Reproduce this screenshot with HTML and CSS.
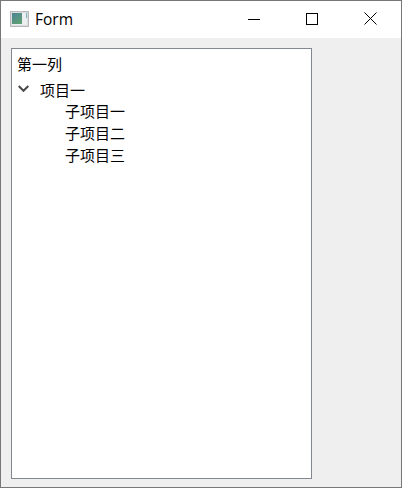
FILE: index.html
```html
<!DOCTYPE html>
<html lang="zh-CN">
<head>
  <meta charset="UTF-8">
  <title>Form</title>
  <link rel="stylesheet" href="styles.css">
</head>
<body>
  <div class="window">
    <div class="titlebar">
      <svg class="app-icon" width="19" height="16" viewBox="0 0 19 16">
        <defs>
          <linearGradient id="iconfill" x1="0" y1="0" x2="0.6" y2="1">
            <stop offset="0" stop-color="#4f8298"/>
            <stop offset="1" stop-color="#5c9f74"/>
          </linearGradient>
        </defs>
        <rect x="0.5" y="0.5" width="18" height="15" fill="#d9dde0" stroke="#b8b8b8"/>
        <rect x="2" y="2" width="15" height="12" fill="#eceff0"/>
        <rect x="2" y="2" width="10" height="11" fill="url(#iconfill)"/>
        <rect x="16" y="2" width="1" height="5" fill="#7fb0c8"/>
      </svg>
      <span class="title">Form</span>
      <div class="controls">
        <div class="ctrl minimize">
          <svg width="12" height="12" viewBox="0 0 12 12"><path d="M0 6.5H12" stroke="#000" fill="none"/></svg>
        </div>
        <div class="ctrl">
          <svg width="12" height="12" viewBox="0 0 12 12"><rect x="0.5" y="0.5" width="11" height="11" stroke="#000" fill="none"/></svg>
        </div>
        <div class="ctrl">
          <svg width="13" height="13" viewBox="0 0 13 13"><path d="M0.5 0.5L12.5 12.5M12.5 0.5L0.5 12.5" stroke="#000" fill="none"/></svg>
        </div>
      </div>
    </div>
    <div class="client">
      <div class="tree">
        <div class="tree-header">第一列</div>
        <div class="tree-row parent">
          <svg class="arrow" width="12" height="8" viewBox="0 0 12 8"><path d="M0.7 1L5.5 5.8L10.3 1" stroke="#4a4a4a" stroke-width="2" fill="none"/></svg>
          <span>项目一</span>
        </div>
        <div class="tree-row child">子项目一</div>
        <div class="tree-row child">子项目二</div>
        <div class="tree-row child">子项目三</div>
      </div>
    </div>
  </div>
</body>
</html>
```

FILE: styles.css
```css
html, body {
  margin: 0;
  padding: 0;
}

body {
  width: 402px;
  height: 488px;
  overflow: hidden;
  font-family: "Noto Sans CJK SC", "Noto Sans", sans-serif;
  color: #000;
}

.window {
  box-sizing: border-box;
  width: 402px;
  height: 488px;
  border: 1px solid #777;
  display: flex;
  flex-direction: column;
  background: #efefef;
}

.titlebar {
  box-sizing: border-box;
  height: 37px;
  background: #fff;
  display: flex;
  align-items: center;
  padding: 0 1px 2px 9px;
}

.app-icon {
  margin-right: 6px;
}

.title {
  font-family: "Open Sans", sans-serif;
  font-size: 15.5px;
}

.controls {
  margin-left: auto;
  display: flex;
}

.ctrl {
  width: 59px;
  height: 35px;
  display: flex;
  align-items: center;
  justify-content: center;
}

.minimize svg {
  margin-left: 2px;
}

.client {
  flex: 1;
  padding: 10px 0 0 10px;
}

.tree {
  box-sizing: border-box;
  width: 301px;
  height: 431px;
  border: 1px solid #828790;
  background: #fff;
  font-size: 15px;
}

.tree-header {
  height: 29px;
  line-height: 29px;
  padding-left: 5px;
}

.tree-row {
  height: 22px;
  line-height: 21px;
}

.parent {
  display: flex;
  align-items: center;
  padding-left: 6px;
}

.arrow {
  margin-right: 10px;
}

.child {
  padding-left: 53px;
}
```
